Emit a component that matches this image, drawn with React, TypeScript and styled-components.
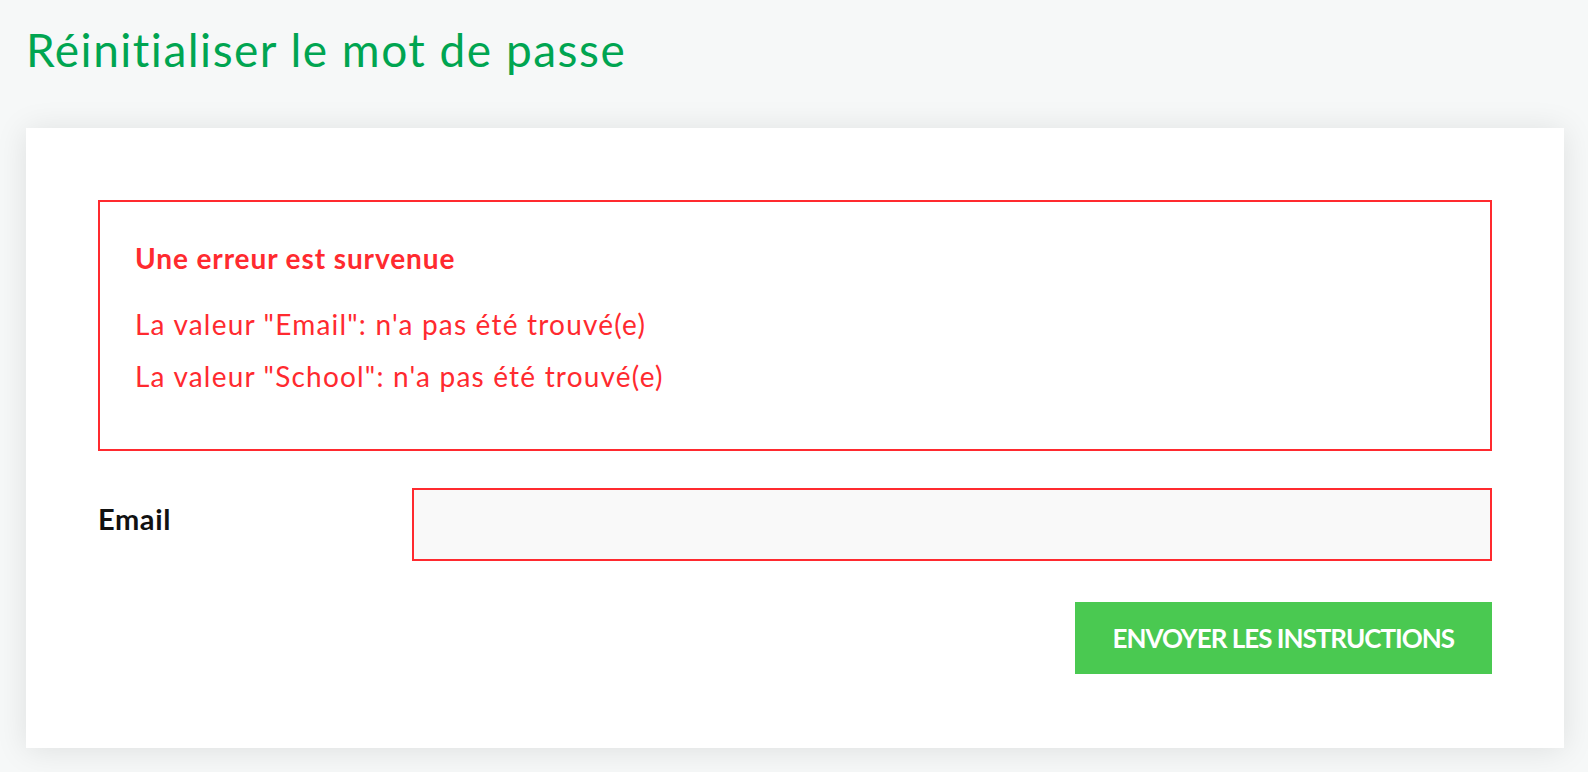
import React from "react";
import styled, { createGlobalStyle } from "styled-components";

const GlobalStyle = createGlobalStyle`
  html, body {
    margin: 0;
    padding: 0;
    background: #f6f8f8;
    font-family: Lato, "Noto Sans", sans-serif;
  }
  * { box-sizing: border-box; }
`;

const Page = styled.div`
  min-height: 772px;
  padding: 19px 24px 24px 26px;
  display: flex;
  flex-direction: column;
`;

const Title = styled.h1`
  margin: 0 0 47px 0;
  font-size: 46px;
  line-height: 62px;
  font-weight: 400;
  letter-spacing: 1.5px;
  color: #00a551;
`;

const Card = styled.div`
  background: #fff;
  padding: 72px 72px 74px;
  box-shadow: 0 2px 30px rgba(0, 0, 0, 0.1);
  display: flex;
  flex-direction: column;
`;

const ErrorBox = styled.div`
  border: 2px solid #ff2a2f;
  padding: 36px 35px 47px;
  color: #ff2a2f;
  display: flex;
  flex-direction: column;
`;

const ErrorHeading = styled.div`
  font-size: 28px;
  line-height: 40px;
  font-weight: 700;
  letter-spacing: 0.9px;
  margin-bottom: 20px;
`;

const ErrorLine = styled.div`
  font-size: 28px;
  line-height: 52px;
  letter-spacing: 1.2px;
`;

const FieldRow = styled.div`
  margin-top: 37px;
  display: grid;
  grid-template-columns: 314px 1fr;
  align-items: start;
`;

const Label = styled.label`
  padding-top: 13px;
  font-size: 29px;
  line-height: 36px;
  font-weight: 700;
  letter-spacing: 0.6px;
  color: #111;
`;

const Input = styled.input`
  height: 73px;
  border: 2px solid #ff2a2f;
  background: #f9f9f9;
  outline: none;
  font-size: 26px;
  padding: 0 20px;
  font-family: inherit;
`;

const Actions = styled.div`
  margin-top: 41px;
  display: flex;
  justify-content: flex-end;
`;

const SubmitButton = styled.button`
  height: 72px;
  padding: 0 38px;
  border: none;
  background: #4ac951;
  color: #fff;
  font-family: inherit;
  font-size: 26px;
  font-weight: 700;
  letter-spacing: -1px;
  text-transform: uppercase;
  cursor: pointer;
`;

const App = () => (
  <>
    <GlobalStyle />
    <Page>
      <Title>Réinitialiser le mot de passe</Title>
      <Card>
        <ErrorBox>
          <ErrorHeading>Une erreur est survenue</ErrorHeading>
          <ErrorLine>La valeur "Email": n'a pas été trouvé(e)</ErrorLine>
          <ErrorLine>La valeur "School": n'a pas été trouvé(e)</ErrorLine>
        </ErrorBox>
        <FieldRow>
          <Label htmlFor="email">Email</Label>
          <Input id="email" type="email" />
        </FieldRow>
        <Actions>
          <SubmitButton type="submit">Envoyer les instructions</SubmitButton>
        </Actions>
      </Card>
    </Page>
  </>
);

export default App;
